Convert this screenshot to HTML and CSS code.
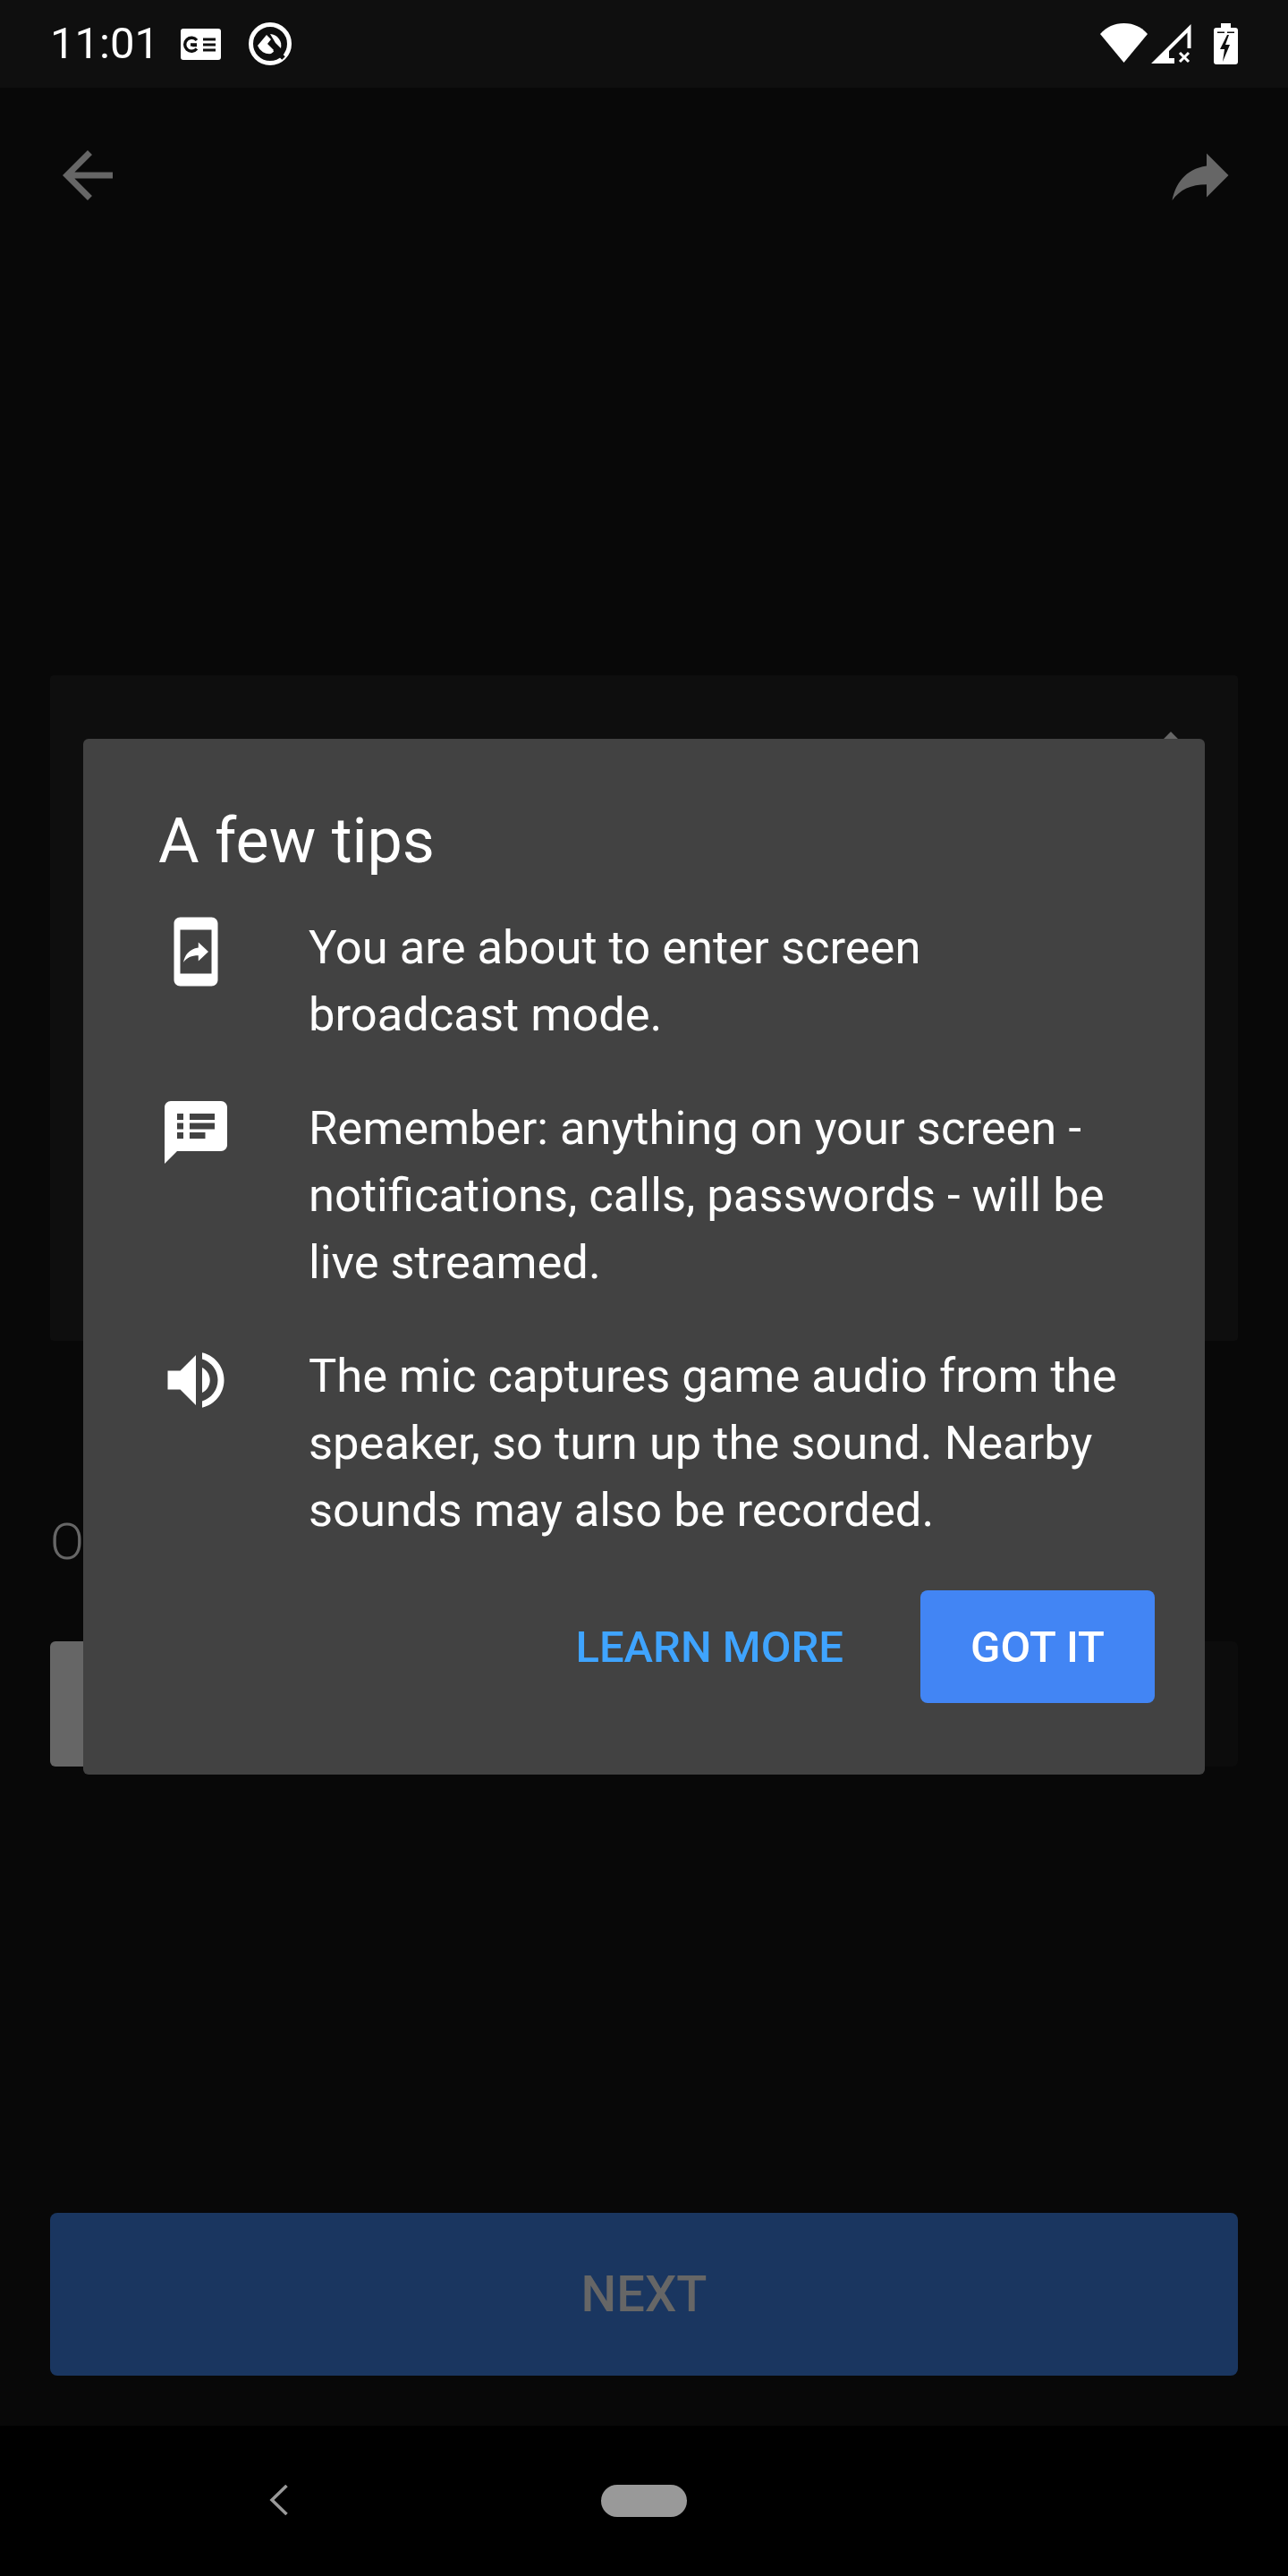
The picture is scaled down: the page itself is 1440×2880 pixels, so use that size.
FILE: index.html
```html
<!DOCTYPE html>
<html lang="en">
<head>
<meta charset="utf-8">
<title>A few tips</title>
<link rel="stylesheet" href="styles.css">
</head>
<body>
<div class="phone">
  <header class="status">
    <div class="status-left">
      <span class="time">11:01</span>
      <svg class="ic-news" viewBox="0 0 45 35"><path fill-rule="evenodd" fill="#fff" d="M3 0h39a3 3 0 0 1 3 3v29a3 3 0 0 1-3 3H3a3 3 0 0 1-3-3V3a3 3 0 0 1 3-3z"/><path fill="none" stroke="#0f0f0f" stroke-width="3.4" d="M18 18h-7v0M18 13a7.5 7.5 0 1 0 0 9.500M18 18.500h-5"/><path stroke="#0f0f0f" stroke-width="3.2" d="M25 12h14M25 18h14M25 24h14"/></svg>
      <svg class="ic-q" viewBox="0 0 50 50"><circle cx="25" cy="25" r="21.500" fill="none" stroke="#fff" stroke-width="5"/><path fill="#fff" d="M11 27 21 15l5 5-4 5 8 8-4 3a14 14 0 0 1-15-9z"/><path fill="#fff" d="M25 14a13 13 0 0 1 12 16l-6-6z"/><path stroke="#0f0f0f" stroke-width="5" d="M30 31l10 10"/></svg>
    </div>
    <div class="status-right">
      <svg class="ic-wifi" viewBox="0 0 53 44"><path fill="#fff" d="M0 12C7 4 16 0 26.500 0S46 4 53 12L26.500 44z"/></svg>
      <svg class="ic-signal" viewBox="0 0 45 44"><path fill="#fff" fill-rule="evenodd" d="M44.500 0v27h-4V9.500L20 30v8h6v6H0z"/><path stroke="#fff" stroke-width="3" d="M32 32l10 10M42 32 32 42"/></svg>
      <svg class="ic-batt" viewBox="0 0 27 46"><path fill="#fff" fill-rule="evenodd" d="M8 0h11v5h5a3 3 0 0 1 3 3v35a3 3 0 0 1-3 3H3a3 3 0 0 1-3-3V8a3 3 0 0 1 3-3h5zM4 9.500h8v1.500H4zM15 9.500h8v1.500h-8zM15 13l-8 16h5l-2 14 8-19h-5l4-11z"/></svg>
    </div>
  </header>

  <div class="content">
    <nav class="appbar">
      <svg class="ic84" viewBox="0 0 24 24"><path fill="#666" d="M20 11H7.830l5.590-5.590L12 4l-8 8 8 8 1.410-1.410L7.830 13H20v-2z"/></svg>
      <svg class="ic84" viewBox="0 0 24 24"><path fill="#666" d="M14 9V5l7 7-7 7v-4.100c-5 0-8.500 1.600-11 5.100 1-5 4-10 11-11z"/></svg>
    </nav>
    <section class="card">
      <span class="caret"></span>
    </section>
    <p class="label">O</p>
    <div class="bar"><div class="bar-fill"></div></div>
    <div class="spacer"></div>
    <div class="next">NEXT</div>
  </div>

  <footer class="navbar">
    <svg class="nav-back" viewBox="0 0 21 34"><path fill="none" stroke="#999" stroke-width="3.500" d="M19.500 1 3 17l16.500 16"/></svg>
    <span class="nav-pill"></span>
  </footer>

  <div class="dialog">
    <h1 class="title">A few tips</h1>
    <div class="tip">
      <svg class="ic84" viewBox="0 0 24 24"><path fill="#fff" d="M17 1.010L7 1c-1.100 0-2 .9-2 2v18c0 1.100.9 2 2 2h10c1.100 0 2-.9 2-2V3c0-1.100-.9-1.990-2-1.990zM17 19H7V5h10v14zm-4.200-5.760v1.750L16 12l-3.200-2.980v1.700c-3.110.43-4.350 2.560-4.800 4.700 1.110-1.500 2.580-2.180 4.800-2.180z"/></svg>
      <p class="tip-text">You are about to enter screen broadcast mode.</p>
    </div>
    <div class="tip">
      <svg class="ic84" viewBox="0 0 24 24"><path fill="#fff" d="M20 2H4c-1.100 0-1.990.9-1.990 2L2 22l4-4h14c1.100 0 2-.9 2-2V4c0-1.100-.9-2-2-2zM8 14H6v-2h2v2zm0-3H6V9h2v2zm0-3H6V6h2v2zm7 6h-5v-2h5v2zm3-3h-8V9h8v2zm0-3h-8V6h8v2z"/></svg>
      <p class="tip-text">Remember: anything on your screen - notifications, calls, passwords - will be live streamed.</p>
    </div>
    <div class="tip">
      <svg class="ic84" viewBox="0 0 24 24"><path fill="#fff" d="M3 9v6h4l5 5V4L7 9H3zm13.500 3c0-1.770-1.020-3.290-2.500-4.030v8.050c1.480-.73 2.500-2.250 2.500-4.020zM14 3.230v2.060c2.890.86 5 3.540 5 6.710s-2.110 5.850-5 6.710v2.060c4.010-.91 7-4.490 7-8.770s-2.990-7.860-7-8.770z"/></svg>
      <p class="tip-text">The mic captures game audio from the speaker, so turn up the sound. Nearby sounds may also be recorded.</p>
    </div>
    <div class="actions">
      <span class="learn">LEARN MORE</span>
      <span class="got">GOT IT</span>
    </div>
  </div>
</div>
</body>
</html>
```

FILE: styles.css
```css
* { box-sizing: border-box; }
html, body { margin: 0; padding: 0; background: #000; }
body { font-family: Roboto, "Liberation Sans", sans-serif; }
.phone { position: relative; width: 1440px; height: 2880px; display: flex; flex-direction: column; overflow: hidden; background: #080808; }

.status { height: 98px; flex: none; background: #0f0f0f; display: flex; justify-content: space-between; align-items: flex-start; padding: 24px 56px 0 56px; color: #fff; }
.status-left { display: flex; align-items: flex-start; }
.time { font-size: 49px; line-height: 50px; margin-top: 0; width: 146px; }
.ic-news { width: 45px; height: 35px; margin-top: 8px; }
.ic-q { width: 50px; height: 50px; margin-left: 30px; }
.status-right { display: flex; align-items: flex-start; }
.ic-wifi { width: 53px; height: 44px; margin-top: 2px; }
.ic-signal { width: 45px; height: 44px; margin-top: 3px; margin-left: 4px; }
.ic-batt { width: 27px; height: 46px; margin-top: 2px; margin-left: 25px; }

.content { flex: 1; display: flex; flex-direction: column; padding: 0 56px 56px; }
.appbar { display: flex; justify-content: space-between; align-items: flex-start; margin: 56px 0 0; height: 84px; padding-right: 0; }
.ic84 { width: 84px; height: 84px; flex: none; display: block; }
.card { position: relative; margin-top: 517px; height: 744px; background: #0e0e0e; border-radius: 4px; }
.caret { position: absolute; right: 68px; top: 66px; width: 14px; height: 14px; background: #666; transform: rotate(45deg); }
.label { margin: 192px 0 0; font-size: 56px; line-height: 66px; color: #666; font-weight: 300; }
.bar { margin-top: 78px; height: 140px; background: #0c0c0c; border-radius: 6px; overflow: hidden; flex: none; }
.bar-fill { width: 661px; height: 100%; background: #666; }
.spacer { flex: 1; }
.next { height: 182px; flex: none; background: #1a3660; border-radius: 8px; color: #666; font-size: 56px; font-weight: 500; display: flex; align-items: center; justify-content: center; }

.navbar { position: relative; height: 168px; flex: none; background: #000; display: flex; align-items: center; justify-content: center; }
.nav-back { position: absolute; left: 301px; top: 66px; width: 21px; height: 34px; }
.nav-pill { width: 96px; height: 36px; border-radius: 18px; background: #999; }

.dialog { position: absolute; left: 93px; top: 826px; width: 1254px; height: 1158px; background: #424242; border-radius: 6px; padding: 0 56px 0 84px; color: #fff; display: flex; flex-direction: column; }
.title { margin: 72px 0 0; font-size: 70px; line-height: 84px; font-weight: 400; }
.tip { display: flex; gap: 84px; margin-top: 40px; }
.tip + .tip { margin-top: 52px; }
.tip-text { margin: 0; font-size: 52.500px; line-height: 75px; width: 930px; }
.actions { display: flex; justify-content: flex-end; align-items: center; margin-top: 52px; }
.learn { color: #3fa4ff; font-size: 49px; font-weight: 500; margin-right: 86px; }
.got { width: 262px; height: 126px; background: #4285f4; border-radius: 8px; font-size: 49px; font-weight: 500; display: flex; align-items: center; justify-content: center; }
```
